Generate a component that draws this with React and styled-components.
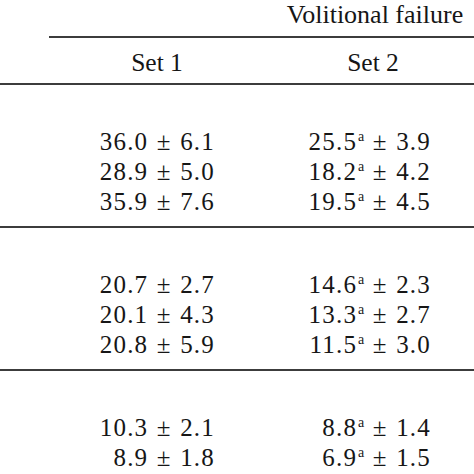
import React from 'react'
import styled, { createGlobalStyle } from 'styled-components'

const groups = [
  [
    ['36.0', '6.1', '25.5', '3.9'],
    ['28.9', '5.0', '18.2', '4.2'],
    ['35.9', '7.6', '19.5', '4.5'],
  ],
  [
    ['20.7', '2.7', '14.6', '2.3'],
    ['20.1', '4.3', '13.3', '2.7'],
    ['20.8', '5.9', '11.5', '3.0'],
  ],
  [
    ['10.3', '2.1', '8.8', '1.4'],
    ['8.9', '1.8', '6.9', '1.5'],
  ],
]

const Global = createGlobalStyle`
  html, body {
    margin: 0;
    background: #fff;
    overflow: hidden;
  }
  body {
    font-family: "Liberation Serif", "Times New Roman", serif;
    color: #161616;
  }
`

const Table = styled.div`
  width: 481px;
`

const Row = styled.div`
  display: grid;
  grid-template-columns: 49px 216px 216px;
`

const SpanHead = styled.div`
  grid-column: 2 / 4;
  display: grid;
  grid-template-columns: 1fr 1fr;
  border-bottom: 2px solid #3c3c3c;
  padding-bottom: 7px;
`

const Title = styled.div`
  grid-column: 2;
  text-align: center;
  font-size: 26px;
  line-height: 29px;
  padding-left: 4px;
`

const SetRow = styled(Row)`
  border-bottom: 2px solid #3c3c3c;
  padding: 10px 0 6px;
`

const SetCell = styled.div`
  grid-column: ${p => p.col};
  text-align: center;
  font-size: 25.5px;
  line-height: 29px;
`

const Group = styled.div`
  padding: 42px 0 9px;
  border-bottom: ${p => (p.last ? 'none' : '2px solid #3c3c3c')};
`

const DataRow = styled(Row)`
  height: 30px;
`

const Num = styled.div`
  grid-column: ${p => p.col};
  text-align: right;
  padding-right: ${p => p.pad}px;
  font-size: 25px;
  line-height: 30px;
  letter-spacing: 1.2px;
  white-space: nowrap;
`

const Sup = styled.span`
  font-size: 14px;
  letter-spacing: 0;
  vertical-align: 9px;
  line-height: 0;
  margin-left: 1px;
`

const Pm = styled.span`
  margin: 0 1px;
`

export default function App() {
  return (
    <>
      <Global />
      <Table>
        <Row>
          <SpanHead>
            <Title>Volitional failure</Title>
          </SpanHead>
        </Row>
        <SetRow>
          <SetCell col={2}>Set 1</SetCell>
          <SetCell col={3}>Set 2</SetCell>
        </SetRow>
        {groups.map((rows, gi) => (
          <Group key={gi} last={gi === groups.length - 1}>
            {rows.map((r, ri) => (
              <DataRow key={ri}>
                <Num col={2} pad={50}>
                  {r[0]} <Pm>±</Pm> {r[1]}
                </Num>
                <Num col={3} pad={50}>
                  {r[2]}
                  <Sup>a</Sup> <Pm>±</Pm> {r[3]}
                </Num>
              </DataRow>
            ))}
          </Group>
        ))}
      </Table>
    </>
  )
}
